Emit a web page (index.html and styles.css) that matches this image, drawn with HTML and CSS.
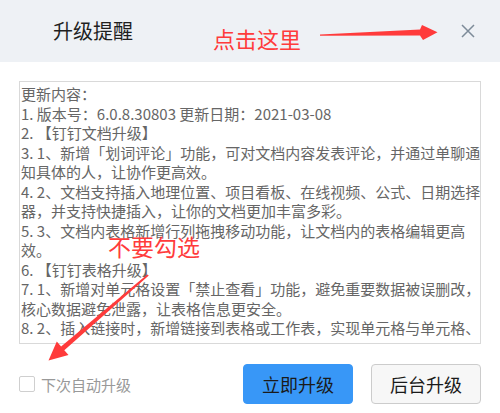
FILE: index.html
```html
<html lang="zh-CN">
<head>
    <meta charset="UTF-8">
    <meta name="viewport" content="width=device-width, initial-scale=1.0">
    <title>升级提醒</title>
    <link rel="stylesheet" href="styles.css">
</head>
<body>
    <div class="dialog">
        <div class="header">
            <span class="title">升级提醒</span>
            <svg class="close" width="14" height="14" viewBox="0 0 14 14">
                <path d="M1 1 L13 13 M13 1 L1 13" stroke="#7d8b99" stroke-width="1.5" fill="none"/>
            </svg>
        </div>

        <div class="notes">
            <p>更新内容：</p>
            <p>1. 版本号：6.0.8.30803 更新日期：2021-03-08</p>
            <p>2. 【钉钉文档升级】</p>
            <p>3. 1、新增「划词评论」功能，可对文档内容发表评论，并通过单聊通<br>知具体的人，让协作更高效。</p>
            <p>4. 2、文档支持插入地理位置、项目看板、在线视频、公式、日期选择<br>器，并支持快捷插入，让你的文档更加丰富多彩。</p>
            <p>5. 3、文档内表格新增行列拖拽移动功能，让文档内的表格编辑更高<br>效。</p>
            <p>6. 【钉钉表格升级】</p>
            <p>7. 1、新增对单元格设置「禁止查看」功能，避免重要数据被误删改，<br>核心数据避免泄露，让表格信息更安全。</p>
            <p>8. 2、插入链接时，新增链接到表格或工作表，实现单元格与单元格、</p>
        </div>

        <div class="footer">
            <label class="auto">
                <span class="checkbox"></span>
                下次自动升级
            </label>
            <div class="actions">
                <button class="btn primary">立即升级</button>
                <button class="btn">后台升级</button>
            </div>
        </div>

        <!-- red annotations drawn over the screenshot -->
        <span class="mark mark-top">点击这里</span>
        <span class="mark mark-mid">不要勾选</span>
        <svg class="arrows" width="500" height="413" viewBox="0 0 500 413">
            <polygon points="320,34.4 420,29.6 422,25 437.5,32.2 423,40 420,35.6 320,35.8" fill="#ff3b3b"/>
            <polygon points="147.2,274.4 148.8,275.6 64.3,350.2 68.5,355 48.5,360.5 56.8,341.6 61.1,346.4" fill="#ff3b3b"/>
        </svg>
    </div>
</body>
</html>
```

FILE: styles.css
```css
body {
    margin: 0;
    font-family: "Noto Sans CJK SC", "Noto Sans", sans-serif;
    background-color: #ffffff;
}

.dialog {
    position: relative;
    width: 500px;
    height: 413px;
    overflow: hidden;
    background-color: #ffffff;
}

.header {
    height: 62px;
    display: flex;
    align-items: center;
    justify-content: space-between;
    padding: 0 25px 0 53px;
    background-color: #eef1f5;
    box-sizing: border-box;
}

.title {
    font-size: 20px;
    color: #1f1f1f;
    line-height: 20px;
    margin-top: -1px;
}

.close {
    display: block;
    margin-top: -1px;
}

.notes {
    margin: 19px 0 0 19px;
    width: 462px;
    height: 263px;
    box-sizing: border-box;
    border: 1px solid #d9d9d9;
    padding: 2px 0 0 1px;
    overflow: hidden;
    font-size: 15px;
    line-height: 19.5px;
    color: #666666;
}

.notes p {
    margin: 0;
    white-space: nowrap;
}

.footer {
    display: flex;
    align-items: center;
    justify-content: space-between;
    padding: 20px 19px 0 19px;
}

.auto {
    display: flex;
    align-items: center;
    gap: 6px;
    font-size: 15px;
    color: #999999;
}

.checkbox {
    width: 14px;
    height: 14px;
    border: 1px solid #cfcfcf;
    border-radius: 2px;
    background-color: #ffffff;
}

.actions {
    display: flex;
    gap: 18px;
}

.btn {
    width: 110px;
    height: 40px;
    font-family: "Noto Sans CJK SC", "Noto Sans", sans-serif;
    font-size: 18px;
    color: #1a1a1a;
    background-color: #f7f7f7;
    border: 1px solid #cccccc;
    border-radius: 4px;
    padding: 0;
}

.btn.primary {
    background-color: #3897f7;
    border-color: #3897f7;
}

.mark {
    position: absolute;
    color: #ff3b3b;
    font-size: 22px;
    line-height: 22px;
}

.mark-top {
    left: 213px;
    top: 27px;
}

.mark-mid {
    left: 108px;
    top: 235px;
    font-size: 23px;
}

.arrows {
    position: absolute;
    left: 0;
    top: 0;
    pointer-events: none;
}
```
